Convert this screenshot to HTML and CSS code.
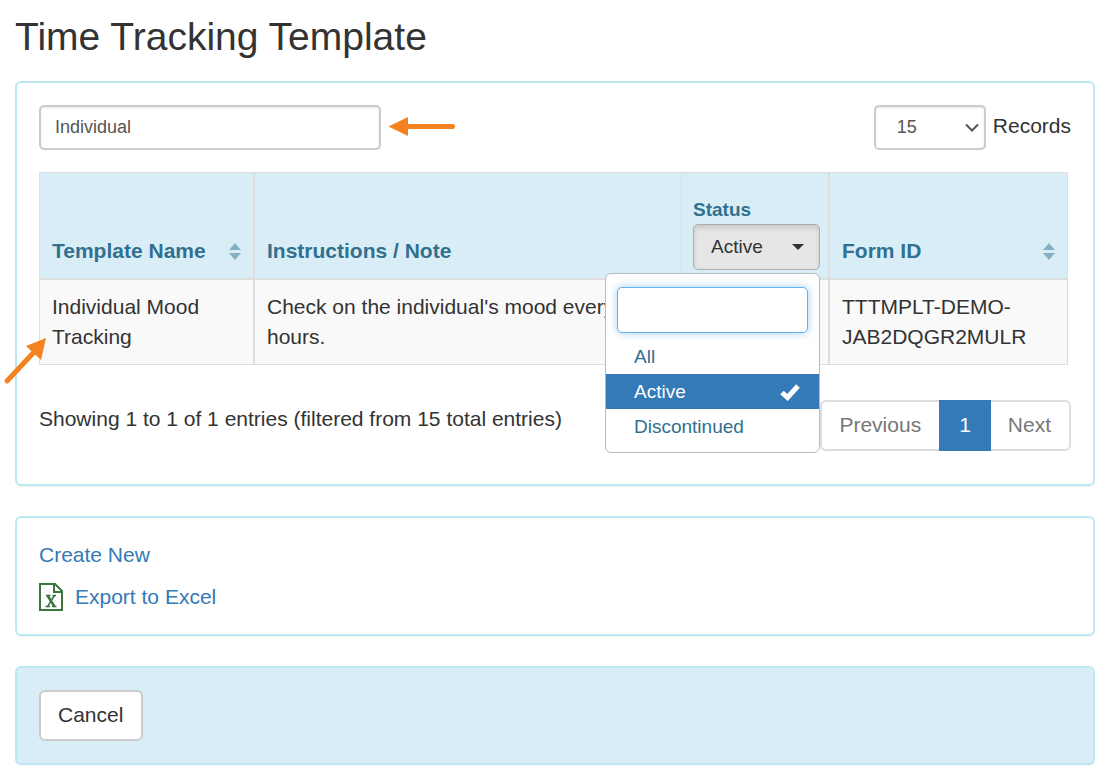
FILE: index.html
```html
<!DOCTYPE html>
<html lang="en">
<head>
<meta charset="utf-8">
<title>Time Tracking Template</title>
<link rel="stylesheet" href="styles.css">
</head>
<body>
<main class="page">
  <h1 class="page-title">Time Tracking Template</h1>

  <section class="panel results">
    <div class="toolbar">
      <div class="search">
        <input class="field search-input" type="text" value="Individual" aria-label="Search templates">
        <svg class="arrow-left" width="68" height="22" viewBox="0 0 68 22" aria-hidden="true"><path d="M18 9.500H64.500" stroke="#f58220" stroke-width="5" stroke-linecap="round"/><path d="M0.500 9.500L20 0V19Z" fill="#f58220"/></svg>
      </div>
      <div class="length">
        <span class="select-wrap">
          <select class="field length-select" id="length"><option>15</option><option>25</option><option>50</option></select>
          <svg class="chevron" width="14" height="10" viewBox="0 0 14 10" aria-hidden="true"><path d="M1 1.500L7 7.500L13 1.500" fill="none" stroke="#555" stroke-width="2"/></svg>
        </span>
        <label for="length">Records</label>
      </div>
    </div>

    <div class="table-area">
      <table class="grid">
        <colgroup><col class="col-name"><col class="col-note"><col class="col-status"><col class="col-form"></colgroup>
        <thead>
          <tr>
            <th scope="col"><div class="head"><span>Template Name</span><svg width="12" height="18" viewBox="0 0 12 18" aria-hidden="true"><path d="M0 8L6 1L12 8ZM0 11L6 18L12 11Z" fill="#86afc4"/></svg></div></th>
            <th scope="col" class="thin-edge">Instructions / Note</th>
            <th scope="col" class="status-cell">
              <div class="status-title" id="status-title">Status</div>
              <div class="status">
                <button class="status-button" type="button" aria-expanded="true" aria-describedby="status-title">Active<svg width="12" height="6" viewBox="0 0 12 6" aria-hidden="true"><path d="M0 0H12L6 6Z" fill="#333"/></svg></button>
                <div class="menu">
                  <div class="menu-search"><input type="text" aria-label="Filter statuses"></div>
                  <ul class="options">
                    <li><a href="#">All</a></li>
                    <li><a href="#" class="selected">Active<svg width="20" height="18" viewBox="0 0 20 18" aria-hidden="true"><path d="M2 9.500L7.500 14.500L18 3" fill="none" stroke="#fff" stroke-width="5"/></svg></a></li>
                    <li><a href="#">Discontinued</a></li>
                  </ul>
                </div>
              </div>
            </th>
            <th scope="col"><div class="head"><span>Form ID</span><svg width="12" height="18" viewBox="0 0 12 18" aria-hidden="true"><path d="M0 8L6 1L12 8ZM0 11L6 18L12 11Z" fill="#86afc4"/></svg></div></th>
          </tr>
        </thead>
        <tbody>
          <tr>
            <td>Individual Mood Tracking</td>
            <td>Check on the individual's mood every 2 hours.</td>
            <td></td>
            <td>TTTMPLT-DEMO-JAB2DQGR2MULR</td>
          </tr>
        </tbody>
      </table>
      <svg class="arrow-row" width="44" height="48" viewBox="0 0 44 48" aria-hidden="true"><path d="M4 44L33 13" stroke="#f58220" stroke-width="5" stroke-linecap="round"/><path d="M43 1L38 23L23 9Z" fill="#f58220"/></svg>
    </div>

    <div class="table-footer">
      <p class="info">Showing 1 to 1 of 1 entries (filtered from 15 total entries)</p>
      <nav class="pagination" aria-label="Pages">
        <a href="#">Previous</a><a href="#" class="current" aria-current="page">1</a><a href="#">Next</a>
      </nav>
    </div>
  </section>

  <section class="panel links">
    <a href="#">Create New</a>
    <a href="#" class="export"><svg width="24" height="28" viewBox="0 0 24 28" aria-hidden="true"><g fill="none" stroke="#3c763d" stroke-width="2"><path d="M1 1H16L23 8V27H1Z"/><path d="M15 1V9H23"/></g><path d="M7 12.500H11.500M13.500 12.500H17M6.500 23.500H11M13 23.500H17.500M15.500 12.500L8.500 23.500" stroke="#3c763d" stroke-width="1.500" fill="none"/><path d="M8.500 12.500L15.500 23.500" stroke="#3c763d" stroke-width="2.500"/></svg>Export to Excel</a>
  </section>

  <section class="panel actions">
    <button class="cancel" type="button">Cancel</button>
  </section>
</main>
</body>
</html>
```
FILE: styles.css
```css
* { box-sizing: border-box; }
body {
  margin: 0;
  background: #fff;
  color: #333;
  font: 21px/30px "Liberation Sans", Arial, sans-serif;
}
a { color: #337ab7; text-decoration: none; }
input, select, button { font-family: inherit; }
svg { display: block; flex: none; }

.page {
  display: flex;
  flex-direction: column;
  gap: 30px;
  padding: 15px 17px 13px 15px;
}
.page-title { margin: 0 0 -8px; font-size: 39px; font-weight: 400; line-height: 44px; }
.panel {
  border: 2px solid #bce8f1;
  border-radius: 6px;
  padding: 22px;
  box-shadow: 0 1px 1px rgba(0, 0, 0, .05);
}
.field {
  height: 45px;
  border: 2px solid #ccc;
  border-radius: 5px;
  background: #fff;
  color: #555;
  font-size: 18px;
  box-shadow: inset 0 1px 2px rgba(0, 0, 0, .1);
}

.toolbar { display: flex; justify-content: space-between; align-items: center; }
.search { display: flex; align-items: center; gap: 7px; }
.search-input { width: 342px; padding: 0 14px; }
.length { display: flex; align-items: center; gap: 7px; }
.length label { line-height: 40px; padding-bottom: 4px; }
.select-wrap { position: relative; display: flex; }
.length-select { width: 112px; padding: 0 21px 2px; appearance: none; }
.chevron { position: absolute; right: 7px; top: 18px; pointer-events: none; }

.table-area { position: relative; margin-top: 22px; margin-right: 3px; }
.grid {
  width: 100%;
  table-layout: fixed;
  border-collapse: separate;
  border-spacing: 0;
  border: solid #ddd;
  border-width: 1px 0 0 1px;
}
.col-name { width: 215px; }
.col-status { width: 148px; }
.col-form { width: 238px; }
.grid th, .grid td {
  border: solid #ddd;
  border-width: 0 2px 1px 0;
  padding: 12px;
  text-align: left;
}
.grid th { height: 107px; background: #d9edf7; color: #31708f; vertical-align: bottom; border-bottom-width: 2px; }
.grid td { background: #f9f9f9; vertical-align: top; overflow-wrap: anywhere; }
.grid .thin-edge { border-right-width: 1px; }
.grid tr > :last-child { border-right-width: 1px; }
.head { display: flex; justify-content: space-between; align-items: center; }
.grid .status-cell { padding: 0 8px 8px 11px; }
.status-title { font-size: 19px; line-height: 28px; }
.status { position: relative; }
.status-button {
  display: flex;
  justify-content: space-between;
  align-items: center;
  width: 100%;
  height: 46px;
  padding: 0 15px 0 17px;
  border: 1px solid #adadad;
  border-radius: 5px;
  background: #e6e6e6;
  color: #333;
  font-size: 19px;
  box-shadow: inset 0 3px 5px rgba(0, 0, 0, .125);
}
.menu {
  position: absolute;
  z-index: 2;
  top: 49px;
  right: 0;
  width: 215px;
  padding-bottom: 8px;
  border: 1px solid #bbb;
  border-radius: 6px;
  background: #fff;
  font-size: 19px;
  font-weight: 400;
}
.menu-search { padding: 13px 11px 6px; }
.menu-search input {
  display: block;
  width: 100%;
  height: 46px;
  padding: 0 12px;
  border: 1px solid #66afe9;
  border-radius: 5px;
  font-size: 19px;
  box-shadow: 0 0 8px rgba(102, 175, 233, .6);
}
.options { list-style: none; margin: 0; padding: 0; }
.options a {
  display: flex;
  justify-content: space-between;
  align-items: center;
  height: 35px;
  padding: 0 19px 0 28px;
  color: #31708f;
}
.options .selected { background: #337ab7; color: #fff; }
.arrow-row { position: absolute; left: -36px; bottom: -20px; }

.table-footer { display: flex; justify-content: space-between; align-items: flex-start; padding: 35px 0 11px; }
.info { margin: 0; padding-top: 4px; }
.pagination { display: flex; }
.pagination a { padding: 8px 18px 9px 17px; border: solid #ddd; border-width: 2px 0; color: #777; }
.pagination a:first-child { border-left-width: 2px; border-radius: 6px 0 0 6px; }
.pagination a:last-child { border-right-width: 2px; border-radius: 0 6px 6px 0; }
.pagination .current { padding: 8px 20px 9px; border-color: #337ab7; background: #337ab7; color: #fff; }

.links { display: flex; flex-direction: column; align-items: flex-start; gap: 12px; }
.export { display: flex; align-items: center; gap: 12px; }

.actions { background: #d9edf7; }
.cancel {
  display: block;
  height: 51px;
  padding: 0 18px 2px 17px;
  border: 2px solid #ccc;
  border-radius: 6px;
  background: #fff;
  color: #333;
  font-size: 21px;
}
```
